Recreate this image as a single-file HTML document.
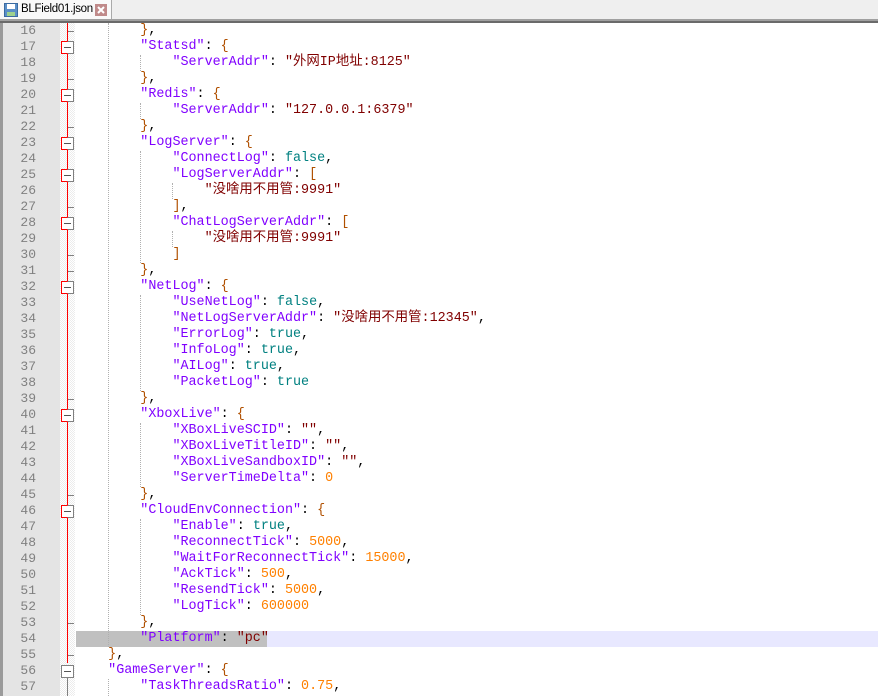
<!DOCTYPE html>
<html><head><meta charset="utf-8"><style>
*{margin:0;padding:0;box-sizing:border-box}
body{width:878px;height:696px;overflow:hidden;background:#fff;position:relative;font-family:"Liberation Mono","Noto Sans CJK SC",monospace}
#tabbar{position:absolute;left:0;top:0;width:878px;height:20px;background:#efefef}
#tab{position:absolute;left:0;top:0;width:112px;height:21px;background:#f9f9f9;border-right:1px solid #aaa;font-family:"Liberation Sans",sans-serif;font-size:11.5px;color:#000;letter-spacing:-0.3px}
#tab span{position:absolute;left:21px;top:3px;white-space:nowrap}
#bord{position:absolute;left:0;top:19px;width:878px;height:4px;background:#a0a0a0;border-bottom:2px solid #6a6a6a}
#lnbar{position:absolute;left:0;top:23px;width:60px;height:673px;background:#e4e4e4;border-left:3px solid #9a9a9a}
#fold{position:absolute;left:60px;top:23px;width:15px;height:673px;background-color:#fff;background-image:repeating-conic-gradient(#ececec 0 25%,#fff 0 50%);background-size:2px 2px}
.ln{position:absolute;left:3px;width:33px;text-align:right;color:#808080;font-size:13px;line-height:16px;height:16px}
.l{position:absolute;left:76px;font-size:13.4px;line-height:16px;height:16px;white-space:pre;color:#000}
.k{color:#8000ff}.s{color:#800000}.n{color:#ff8000}.b{color:#008080}.p{color:#b05000}
.g{position:absolute;width:0;border-left:1px dotted #b0b0b0}
</style></head><body>
<div id="tabbar"></div>
<div id="tab">
<svg style="position:absolute;left:4px;top:3px" width="14" height="14" viewBox="0 0 14 14"><rect x="0.5" y="0.5" width="13" height="13" fill="#5a8fc8" stroke="#3a6aa0"/><rect x="3" y="1" width="8" height="5" fill="#fff"/><rect x="3" y="9" width="8" height="4" fill="#9ed18e"/></svg>
<span>BLField01.json</span>
<svg style="position:absolute;left:95px;top:4px" width="12" height="12" viewBox="0 0 12 12"><rect width="12" height="12" fill="#c08a8a"/><path d="M3 3L9 9M9 3L3 9" stroke="#fff" stroke-width="2"/></svg>
</div>
<div id="bord"></div>
<div id="lnbar"></div>
<div id="fold"></div>
<div style="position:absolute;left:76px;top:631px;width:802px;height:16px;background:#e8e8ff"></div>
<div style="position:absolute;left:76px;top:631px;width:191px;height:16px;background:#c0c0c0"></div>
<div style="position:absolute;left:67px;top:23px;width:1px;height:640px;background:#f00"></div>
<div style="position:absolute;left:67px;top:671px;width:1px;height:25px;background:#808080"></div>
<svg style="position:absolute;left:60px;top:23px" width="16" height="673">
<g stroke="#808080">
<line x1="8" y1="8.5" x2="14" y2="8.5"/><line x1="8" y1="56.5" x2="14" y2="56.5"/><line x1="8" y1="104.5" x2="14" y2="104.5"/><line x1="8" y1="184.5" x2="14" y2="184.5"/><line x1="8" y1="232.5" x2="14" y2="232.5"/><line x1="8" y1="248.5" x2="14" y2="248.5"/><line x1="8" y1="376.5" x2="14" y2="376.5"/><line x1="8" y1="472.5" x2="14" y2="472.5"/><line x1="8" y1="600.5" x2="14" y2="600.5"/><line x1="8" y1="632.5" x2="14" y2="632.5"/></g>
<g fill="#fff" stroke="#f00">
<rect x="1.5" y="18.5" width="12" height="12"/><rect x="1.5" y="66.5" width="12" height="12"/><rect x="1.5" y="114.5" width="12" height="12"/><rect x="1.5" y="146.5" width="12" height="12"/><rect x="1.5" y="194.5" width="12" height="12"/><rect x="1.5" y="258.5" width="12" height="12"/><rect x="1.5" y="386.5" width="12" height="12"/><rect x="1.5" y="482.5" width="12" height="12"/></g>
<g fill="none" stroke="#808080"><path d="M7.5 18.5h6v12h-6"/><path d="M7.5 66.5h6v12h-6"/><path d="M7.5 114.5h6v12h-6"/><path d="M7.5 146.5h6v12h-6"/><path d="M7.5 194.5h6v12h-6"/><path d="M7.5 258.5h6v12h-6"/><path d="M7.5 386.5h6v12h-6"/><path d="M7.5 482.5h6v12h-6"/></g>
<rect x="1.5" y="642.5" width="12" height="12" fill="#fff" stroke="#808080"/>
<g stroke="#555"><line x1="4" y1="24.5" x2="11" y2="24.5"/><line x1="4" y1="72.5" x2="11" y2="72.5"/><line x1="4" y1="120.5" x2="11" y2="120.5"/><line x1="4" y1="152.5" x2="11" y2="152.5"/><line x1="4" y1="200.5" x2="11" y2="200.5"/><line x1="4" y1="264.5" x2="11" y2="264.5"/><line x1="4" y1="392.5" x2="11" y2="392.5"/><line x1="4" y1="488.5" x2="11" y2="488.5"/><line x1="4" y1="648.5" x2="11" y2="648.5"/></g>
</svg>
<div class="g" style="left:108px;top:23px;height:624px"></div>
<div class="g" style="left:108px;top:679px;height:17px"></div>
<div class="g" style="left:140px;top:55px;height:16px"></div>
<div class="g" style="left:140px;top:103px;height:16px"></div>
<div class="g" style="left:140px;top:151px;height:112px"></div>
<div class="g" style="left:172px;top:183px;height:16px"></div>
<div class="g" style="left:172px;top:231px;height:16px"></div>
<div class="g" style="left:140px;top:295px;height:96px"></div>
<div class="g" style="left:140px;top:423px;height:64px"></div>
<div class="g" style="left:140px;top:519px;height:96px"></div>

<div class="ln" style="top:23px">16</div><div class="ln" style="top:39px">17</div><div class="ln" style="top:55px">18</div><div class="ln" style="top:71px">19</div><div class="ln" style="top:87px">20</div><div class="ln" style="top:103px">21</div><div class="ln" style="top:119px">22</div><div class="ln" style="top:135px">23</div><div class="ln" style="top:151px">24</div><div class="ln" style="top:167px">25</div><div class="ln" style="top:183px">26</div><div class="ln" style="top:199px">27</div><div class="ln" style="top:215px">28</div><div class="ln" style="top:231px">29</div><div class="ln" style="top:247px">30</div><div class="ln" style="top:263px">31</div><div class="ln" style="top:279px">32</div><div class="ln" style="top:295px">33</div><div class="ln" style="top:311px">34</div><div class="ln" style="top:327px">35</div><div class="ln" style="top:343px">36</div><div class="ln" style="top:359px">37</div><div class="ln" style="top:375px">38</div><div class="ln" style="top:391px">39</div><div class="ln" style="top:407px">40</div><div class="ln" style="top:423px">41</div><div class="ln" style="top:439px">42</div><div class="ln" style="top:455px">43</div><div class="ln" style="top:471px">44</div><div class="ln" style="top:487px">45</div><div class="ln" style="top:503px">46</div><div class="ln" style="top:519px">47</div><div class="ln" style="top:535px">48</div><div class="ln" style="top:551px">49</div><div class="ln" style="top:567px">50</div><div class="ln" style="top:583px">51</div><div class="ln" style="top:599px">52</div><div class="ln" style="top:615px">53</div><div class="ln" style="top:631px">54</div><div class="ln" style="top:647px">55</div><div class="ln" style="top:663px">56</div><div class="ln" style="top:679px">57</div>

<div class="l" style="top:23px">        <span class="p">}</span>,</div>
<div class="l" style="top:39px">        <span class="k">"Statsd"</span>: <span class="p">{</span></div>
<div class="l" style="top:55px">            <span class="k">"ServerAddr"</span>: <span class="s">"外网IP地址:8125"</span></div>
<div class="l" style="top:71px">        <span class="p">}</span>,</div>
<div class="l" style="top:87px">        <span class="k">"Redis"</span>: <span class="p">{</span></div>
<div class="l" style="top:103px">            <span class="k">"ServerAddr"</span>: <span class="s">"127.0.0.1:6379"</span></div>
<div class="l" style="top:119px">        <span class="p">}</span>,</div>
<div class="l" style="top:135px">        <span class="k">"LogServer"</span>: <span class="p">{</span></div>
<div class="l" style="top:151px">            <span class="k">"ConnectLog"</span>: <span class="b">false</span>,</div>
<div class="l" style="top:167px">            <span class="k">"LogServerAddr"</span>: <span class="p">[</span></div>
<div class="l" style="top:183px">                <span class="s">"没啥用不用管:9991"</span></div>
<div class="l" style="top:199px">            <span class="p">]</span>,</div>
<div class="l" style="top:215px">            <span class="k">"ChatLogServerAddr"</span>: <span class="p">[</span></div>
<div class="l" style="top:231px">                <span class="s">"没啥用不用管:9991"</span></div>
<div class="l" style="top:247px">            <span class="p">]</span></div>
<div class="l" style="top:263px">        <span class="p">}</span>,</div>
<div class="l" style="top:279px">        <span class="k">"NetLog"</span>: <span class="p">{</span></div>
<div class="l" style="top:295px">            <span class="k">"UseNetLog"</span>: <span class="b">false</span>,</div>
<div class="l" style="top:311px">            <span class="k">"NetLogServerAddr"</span>: <span class="s">"没啥用不用管:12345"</span>,</div>
<div class="l" style="top:327px">            <span class="k">"ErrorLog"</span>: <span class="b">true</span>,</div>
<div class="l" style="top:343px">            <span class="k">"InfoLog"</span>: <span class="b">true</span>,</div>
<div class="l" style="top:359px">            <span class="k">"AILog"</span>: <span class="b">true</span>,</div>
<div class="l" style="top:375px">            <span class="k">"PacketLog"</span>: <span class="b">true</span></div>
<div class="l" style="top:391px">        <span class="p">}</span>,</div>
<div class="l" style="top:407px">        <span class="k">"XboxLive"</span>: <span class="p">{</span></div>
<div class="l" style="top:423px">            <span class="k">"XBoxLiveSCID"</span>: <span class="s">""</span>,</div>
<div class="l" style="top:439px">            <span class="k">"XBoxLiveTitleID"</span>: <span class="s">""</span>,</div>
<div class="l" style="top:455px">            <span class="k">"XBoxLiveSandboxID"</span>: <span class="s">""</span>,</div>
<div class="l" style="top:471px">            <span class="k">"ServerTimeDelta"</span>: <span class="n">0</span></div>
<div class="l" style="top:487px">        <span class="p">}</span>,</div>
<div class="l" style="top:503px">        <span class="k">"CloudEnvConnection"</span>: <span class="p">{</span></div>
<div class="l" style="top:519px">            <span class="k">"Enable"</span>: <span class="b">true</span>,</div>
<div class="l" style="top:535px">            <span class="k">"ReconnectTick"</span>: <span class="n">5000</span>,</div>
<div class="l" style="top:551px">            <span class="k">"WaitForReconnectTick"</span>: <span class="n">15000</span>,</div>
<div class="l" style="top:567px">            <span class="k">"AckTick"</span>: <span class="n">500</span>,</div>
<div class="l" style="top:583px">            <span class="k">"ResendTick"</span>: <span class="n">5000</span>,</div>
<div class="l" style="top:599px">            <span class="k">"LogTick"</span>: <span class="n">600000</span></div>
<div class="l" style="top:615px">        <span class="p">}</span>,</div>
<div class="l" style="top:631px">        <span class="k">"Platform"</span>: <span class="s">"pc"</span></div>
<div class="l" style="top:647px">    <span class="p">}</span>,</div>
<div class="l" style="top:663px">    <span class="k">"GameServer"</span>: <span class="p">{</span></div>
<div class="l" style="top:679px">        <span class="k">"TaskThreadsRatio"</span>: <span class="n">0.75</span>,</div>
</body></html>
